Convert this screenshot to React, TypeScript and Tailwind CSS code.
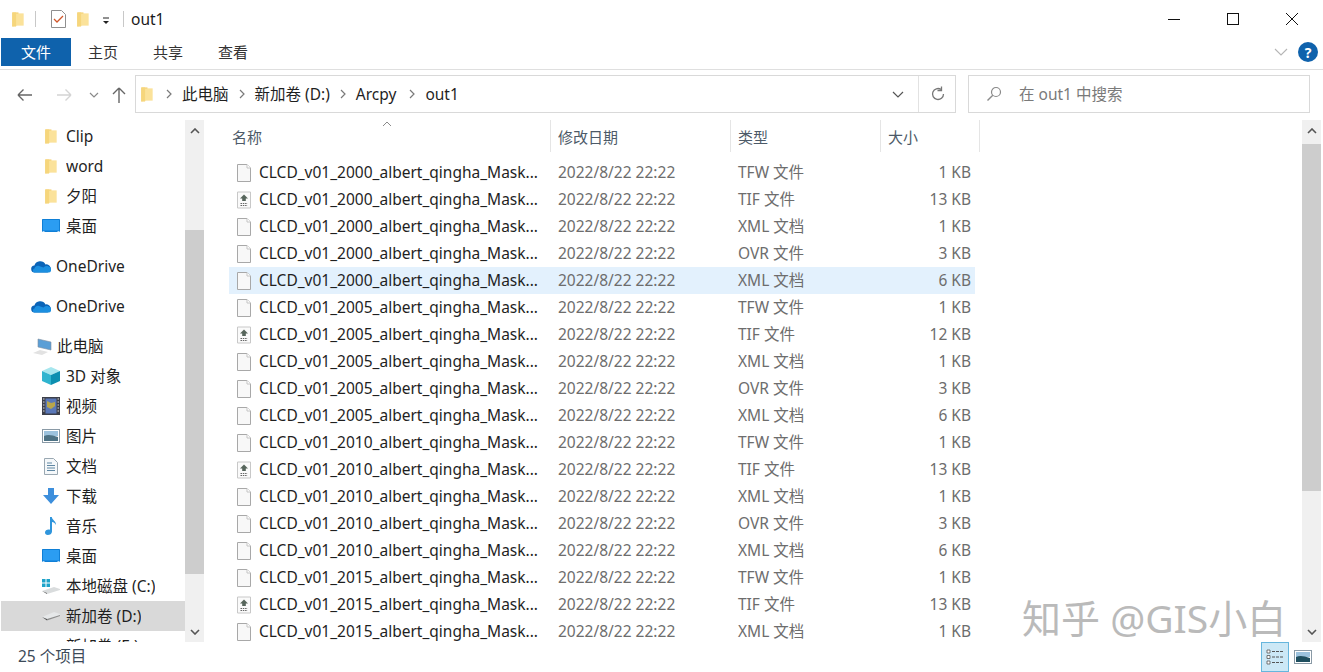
import type { ReactNode } from "react"

const FONT = "font-['Noto_Sans','Noto_Sans_CJK_SC',sans-serif]"

function Folder({ className = "" }: { className?: string }) {
  return (
    <svg viewBox="0 0 14 18" className={`h-[17px] w-[14px] shrink-0 ${className}`}>
      <path d="M1 1.500h6.500v13L1 16.500z" fill="#f3c95f" />
      <path d="M4 2.500h9v13H4z" fill="#fbe29a" />
      <path d="M1 1.500h4v15H1z" fill="#f6d67c" />
    </svg>
  )
}

function Desktop() {
  return (
    <svg viewBox="0 0 18 14" className="h-[14px] w-[18px] shrink-0">
      <rect x="0" y="0" width="18" height="13" rx="0.5" fill="#0f7fd6" />
      <path d="M1 1h16v10.500H1z" fill="#2b9df2" />
      <path d="M0.500 12.500h2M15.500 12.500h2" stroke="#e8f4fd" strokeWidth="0.800" />
    </svg>
  )
}

function Cloud() {
  return (
    <svg viewBox="0 0 20 13" className="h-[13px] w-[20px] shrink-0">
      <path d="M4 12.500a3.500 3.500 0 0 1-.6-7A6 6 0 0 1 14.500 4.500a4 4 0 0 1 2 8z" fill="#0a64b8" />
      <path d="M4 12.500h13a3 3 0 0 0 .5-6c-2-.8-3.500-.3-5 1L8 6c-2-.5-4 .5-4.500 2.500C1.500 9 1 12.500 4 12.500z" fill="#1b8fe0" />
    </svg>
  )
}

function Computer() {
  return (
    <svg viewBox="0 0 20 17" className="h-[17px] w-[20px] shrink-0">
      <path d="M6 1l13 3v8L6 9z" fill="#5b9fd6" stroke="#7f8f9f" strokeWidth="0.600" />
      <path d="M1 15l7-3 8 2-6 3z" fill="#e2e2e2" />
    </svg>
  )
}

function Cube() {
  return (
    <svg viewBox="0 0 18 18" className="h-[18px] w-[18px] shrink-0">
      <path d="M9 0l9 4-9 4-9-4z" fill="#a6e6ee" />
      <path d="M0 4l9 4v10l-9-4z" fill="#2fb4cf" />
      <path d="M18 4l-9 4v10l9-4z" fill="#0d8fb0" />
    </svg>
  )
}

function Film() {
  return (
    <svg viewBox="0 0 18 18" className="h-[18px] w-[18px] shrink-0">
      <rect width="18" height="18" fill="#3c3f4a" />
      <rect x="3.500" y="1.500" width="11" height="15" fill="#5a78b8" />
      <path d="M5 4l4 2 4-1v4l-4 3-4-2z" fill="#b9a64a" />
      <path d="M1 2h1.500M1 5h1.500M1 8h1.500M1 11h1.500M1 14h1.500M15.500 2H17M15.500 5H17M15.500 8H17M15.500 11H17M15.500 14H17" stroke="#d8d8d8" strokeWidth="1" />
    </svg>
  )
}

function Picture() {
  return (
    <svg viewBox="0 0 18 14" className="h-[14px] w-[18px] shrink-0">
      <rect x="0.500" y="0.500" width="17" height="13" fill="#fff" stroke="#8a9aa6" />
      <path d="M2 2h14v5H2z" fill="#9cc2dd" />
      <path d="M2 7c4-2 8-1 14 1v4H2z" fill="#4d7284" />
    </svg>
  )
}

function Doc() {
  return (
    <svg viewBox="0 0 14 17" className="h-[17px] w-[14px] shrink-0">
      <path d="M.5.500h9l4 4v12H.5z" fill="#f5f8fa" stroke="#9aa8b2" />
      <path d="M3 5h5M3 7.500h8M3 10h8M3 12.500h8" stroke="#5f87a3" strokeWidth="1" />
    </svg>
  )
}

function Download() {
  return (
    <svg viewBox="0 0 16 16" className="h-[16px] w-[16px] shrink-0">
      <path d="M5 0h6v7h5l-8 9-8-9h5z" fill="#3d8fdc" />
    </svg>
  )
}

function Music() {
  return (
    <svg viewBox="0 0 12 18" className="h-[18px] w-[12px] shrink-0">
      <path d="M5 0h1.800c.3 3 4.500 4 4.200 8-1-2-2.500-2.800-4-3v9.500C7 17 4.800 18 2.800 18 1 18 0 17 0 15.500 0 13.500 2.500 12 5 12.800z" fill="#2f95dc" />
    </svg>
  )
}

function DriveC() {
  return (
    <svg viewBox="0 0 20 16" className="h-[16px] w-[20px] shrink-0">
      <path d="M1 1h3.500v3.500H1zM5.500 1H9v3.500H5.500zM1 5.500h3.500V9H1zM5.500 5.500H9V9H5.500z" fill="#1fa3c9" />
      <path d="M1 13l12-4 6 2v1L6 16z" fill="#d9dcdd" />
      <path d="M1 13l5 3v-1z" fill="#6a6a6a" />
    </svg>
  )
}

function DriveD() {
  return (
    <svg viewBox="0 0 20 10" className="h-[10px] w-[20px] shrink-0">
      <path d="M1 6l12-5 6 2v1L6 9.500z" fill="#e6e8e9" />
      <path d="M1 6l5 3.500V8z" fill="#4e4e4e" />
      <path d="M6 8l13-4v1L6 9.500z" fill="#8d8d8d" />
    </svg>
  )
}

function BlankFile() {
  return (
    <svg viewBox="0 0 16 18" className="h-[18px] w-[16px] shrink-0">
      <path d="M1.500.500h9.500l3.500 3.500v13.500h-13z" fill="#f8f8f8" stroke="#a8a8a8" />
      <path d="M11 .500V4h3.500" fill="#fff" stroke="#c4c4c4" />
    </svg>
  )
}

function TifFile() {
  return (
    <svg viewBox="0 0 16 18" className="h-[18px] w-[16px] shrink-0">
      <path d="M1.500 1h13v16h-13z" fill="#fafafa" stroke="#c8c8c8" />
      <path d="M8 3.500l4 4H9.800V10H6.200V7.500H4z" fill="#56655b" />
      <path d="M4.500 12.500h7M4.500 14.500h7" stroke="#666" strokeWidth="1" strokeDasharray="1.500 .8" />
    </svg>
  )
}

function NavItem({ icon, label, indent, active }: { icon: ReactNode; label: string; indent: string; active?: boolean }) {
  return (
    <div className={`flex h-[30px] shrink-0 items-center text-[15.5px] text-[#1f1f1f] ${indent} ${active ? "bg-[#d9d9d9]" : ""}`}>
      {icon}
      <span className="mt-[2px] truncate">{label}</span>
    </div>
  )
}

function Crumb({ label, className = "" }: { label: string; className?: string }) {
  return (
    <div className={`flex items-center ${className}`}>
      <svg viewBox="0 0 6 10" className="mx-[10px] h-[10px] w-[6px]">
        <path d="M1 1l4 4-4 4" fill="none" stroke="#7a7a7a" strokeWidth="1.200" />
      </svg>
      <span className="mt-[2px]">{label}</span>
    </div>
  )
}

const quick = [
  { icon: <Folder className="mr-[8px]" />, label: "Clip" },
  { icon: <Folder className="mr-[8px]" />, label: "word" },
  { icon: <Folder className="mr-[8px]" />, label: "夕阳" },
]

const libs = [
  { icon: <Cube />, label: "3D 对象" },
  { icon: <Film />, label: "视频" },
  { icon: <Picture />, label: "图片" },
  { icon: <Doc />, label: "文档" },
  { icon: <Download />, label: "下载" },
  { icon: <Music />, label: "音乐" },
  { icon: <Desktop />, label: "桌面" },
  { icon: <DriveC />, label: "本地磁盘 (C:)" },
]

const files = [
  ["2000", "TFW 文件", "1 KB"],
  ["2000", "TIF 文件", "13 KB"],
  ["2000", "XML 文档", "1 KB"],
  ["2000", "OVR 文件", "3 KB"],
  ["2000", "XML 文档", "6 KB"],
  ["2005", "TFW 文件", "1 KB"],
  ["2005", "TIF 文件", "12 KB"],
  ["2005", "XML 文档", "1 KB"],
  ["2005", "OVR 文件", "3 KB"],
  ["2005", "XML 文档", "6 KB"],
  ["2010", "TFW 文件", "1 KB"],
  ["2010", "TIF 文件", "13 KB"],
  ["2010", "XML 文档", "1 KB"],
  ["2010", "OVR 文件", "3 KB"],
  ["2010", "XML 文档", "6 KB"],
  ["2015", "TFW 文件", "1 KB"],
  ["2015", "TIF 文件", "13 KB"],
  ["2015", "XML 文档", "1 KB"],
]

export default function App() {
  return (
    <div className={`relative flex h-[672px] w-[1323px] flex-col overflow-hidden bg-white ${FONT}`}>
      {/* title bar */}
      <div className="flex h-[38px] shrink-0 items-center">
        <Folder className="ml-[11px]" />
        <div className="ml-[10px] h-[16px] w-px bg-[#c8c8c8]" />
        <svg viewBox="0 0 15 18" className="ml-[15px] h-[18px] w-[15px]">
          <path d="M.5.500h10l4 4v13H.5z" fill="#fff" stroke="#8f8f8f" />
          <path d="M3 9l3 3 6-6" fill="none" stroke="#d0562a" strokeWidth="1.300" />
        </svg>
        <Folder className="ml-[10px]" />
        <svg viewBox="0 0 8 8" className="ml-[12px] mt-[3px] h-[8px] w-[8px]">
          <path d="M1 1h6" stroke="#222" strokeWidth="1" />
          <path d="M1 4h6L4 7z" fill="#222" />
        </svg>
        <div className="ml-[13px] h-[16px] w-px bg-[#c8c8c8]" />
        <span className="ml-[7px] mt-[2px] text-[15.5px] text-[#1a1a1a]">out1</span>
        <div className="ml-auto mr-[25px] flex items-center gap-[47px]">
          <svg viewBox="0 0 12 12" className="h-[12px] w-[12px]">
            <path d="M0 6.500h12" stroke="#111" strokeWidth="1" />
          </svg>
          <svg viewBox="0 0 12 12" className="h-[12px] w-[12px]">
            <rect x=".5" y=".5" width="11" height="11" fill="none" stroke="#111" />
          </svg>
          <svg viewBox="0 0 12 12" className="h-[12px] w-[12px]">
            <path d="M0 0l12 12M12 0L0 12" stroke="#111" strokeWidth="1" />
          </svg>
        </div>
      </div>

      {/* ribbon tabs */}
      <div className="flex h-[32px] shrink-0 border-b border-[#dfdfdf] pb-[3px] text-[15px] text-[#333]">
        <div className="ml-px flex w-[70px] items-center justify-center bg-[#0f62ac] text-white">文件</div>
        <div className="ml-[17px] flex items-center">主页</div>
        <div className="ml-[35px] flex items-center">共享</div>
        <div className="ml-[35px] flex items-center">查看</div>
        <div className="ml-auto mr-[5px] flex items-center gap-[10px]">
          <svg viewBox="0 0 14 8" className="h-[8px] w-[14px]">
            <path d="M1 1l6 6 6-6" fill="none" stroke="#b5b5b5" strokeWidth="1.100" />
          </svg>
          <div className="flex h-[20px] w-[20px] items-center justify-center rounded-full bg-[#0f62ac] text-[14px] font-bold text-white">?</div>
        </div>
      </div>

      {/* address bar */}
      <div className="flex h-[50px] shrink-0 items-center pb-[2px]">
        <svg viewBox="0 0 16 14" className="ml-[17px] mt-[2px] h-[14px] w-[16px]">
          <path d="M1 7h14M1 7l5.500-5.500M1 7l5.500 5.500" fill="none" stroke="#666" strokeWidth="1.400" />
        </svg>
        <svg viewBox="0 0 16 14" className="ml-[23px] mt-[2px] h-[14px] w-[16px]">
          <path d="M15 7H1M15 7L9.500 1.500M15 7l-5.500 5.500" fill="none" stroke="#d4d4d4" strokeWidth="1.400" />
        </svg>
        <svg viewBox="0 0 10 6" className="ml-[17px] mt-[2px] h-[6px] w-[10px]">
          <path d="M1 1l4 4 4-4" fill="none" stroke="#8a8a8a" strokeWidth="1.200" />
        </svg>
        <svg viewBox="0 0 14 16" className="ml-[13px] mt-[2px] h-[16px] w-[14px]">
          <path d="M7 16V1M7 1L1 7M7 1l6 6" fill="none" stroke="#666" strokeWidth="1.400" />
        </svg>
        <div className="ml-[9px] flex h-[38px] w-[821px] items-center border border-[#d9d9d9] text-[15.5px] text-[#1f1f1f]">
          <Folder className="ml-[4px] mr-[2px]" />
          <Crumb label="此电脑" />
          <Crumb label="新加卷 (D:)" />
          <Crumb label="Arcpy" className="mr-[3px]" />
          <Crumb label="out1" />
          <svg viewBox="0 0 12 7" className="ml-auto h-[7px] w-[12px]">
            <path d="M1 1l5 5 5-5" fill="none" stroke="#555" strokeWidth="1.200" />
          </svg>
          <div className="ml-[14px] h-full w-px bg-[#e2e2e2]" />
          <svg viewBox="0 0 16 16" className="ml-[11px] mr-[9px] h-[16px] w-[16px]">
            <path d="M13.500 8A5.500 5.500 0 1 1 11 3.400" fill="none" stroke="#777" strokeWidth="1.300" />
            <path d="M11.500 .5v4h-4" fill="none" stroke="#777" strokeWidth="1.300" />
          </svg>
        </div>
        <div className="ml-[12px] flex h-[38px] w-[342px] items-center border border-[#d9d9d9] text-[15.5px] text-[#7a7a7a]">
          <svg viewBox="0 0 16 16" className="ml-[17px] h-[16px] w-[16px]">
            <circle cx="10" cy="6" r="4.500" fill="none" stroke="#8a8a8a" strokeWidth="1.200" />
            <path d="M6.800 9.200L1.500 14.500" stroke="#8a8a8a" strokeWidth="1.400" />
          </svg>
          <span className="ml-[17px] mt-[2px]">在 out1 中搜索</span>
        </div>
      </div>

      {/* main */}
      <div className="flex h-[522px] shrink-0">
        <div className="flex w-[185px] shrink-0 flex-col overflow-hidden pl-px pt-px">
          {quick.map((item) => (
            <NavItem key={item.label} icon={item.icon} label={item.label} indent="pl-[43px]" />
          ))}
          <NavItem icon={<span className="mr-[6px]"><Desktop /></span>} label="桌面" indent="pl-[41px]" />
          <div className="h-[10px] shrink-0" />
          <NavItem icon={<span className="mr-[5px]"><Cloud /></span>} label="OneDrive" indent="pl-[30px]" />
          <div className="h-[10px] shrink-0" />
          <NavItem icon={<span className="mr-[5px]"><Cloud /></span>} label="OneDrive" indent="pl-[30px]" />
          <div className="h-[10px] shrink-0" />
          <NavItem icon={<span className="mr-[5px]"><Computer /></span>} label="此电脑" indent="pl-[31px]" />
          {libs.map((item) => (
            <NavItem
              key={item.label}
              icon={<span className="mr-[6px] flex w-[18px] justify-center">{item.icon}</span>}
              label={item.label}
              indent="pl-[41px]"
            />
          ))}
          <NavItem
            icon={<span className="mr-[6px] flex w-[18px] justify-center"><DriveD /></span>}
            label="新加卷 (D:)"
            indent="pl-[41px]"
            active
          />
          <NavItem icon={<span className="mr-[6px] w-[18px]" />} label="新加卷 (E:)" indent="pl-[41px]" />
        </div>

        {/* sidebar scrollbar */}
        <div className="flex w-[19px] shrink-0 flex-col bg-[#f0f0f0]">
          <div className="flex h-[110px] justify-center pt-[8px]">
            <svg viewBox="0 0 10 6" className="h-[6px] w-[10px]">
              <path d="M1 5l4-4 4 4" fill="none" stroke="#555" strokeWidth="1.600" />
            </svg>
          </div>
          <div className="h-[344px] bg-[#cdcdcd]" />
          <div className="flex flex-1 items-end justify-center pb-[7px]">
            <svg viewBox="0 0 10 6" className="h-[6px] w-[10px]">
              <path d="M1 1l4 4 4-4" fill="none" stroke="#555" strokeWidth="1.600" />
            </svg>
          </div>
        </div>

        {/* file list */}
        <div className="relative flex min-w-0 flex-1 flex-col overflow-hidden">
          <div className="ml-[25px] grid h-[39px] w-[751px] shrink-0 grid-cols-[321px_180px_150px_100px] pb-[7px] text-[15px] text-[#4d5a68]">
            <div className="flex items-center pl-[3px]"><span className="mt-[2px]">名称</span></div>
            <div className="flex items-center border-l border-[#e5e5e5] pl-[7px]"><span className="mt-[2px]">修改日期</span></div>
            <div className="flex items-center border-l border-[#e5e5e5] pl-[7px]"><span className="mt-[2px]">类型</span></div>
            <div className="flex items-center border-x border-[#e5e5e5] pl-[7px]"><span className="mt-[2px]">大小</span></div>
          </div>
          <svg viewBox="0 0 10 6" className="absolute left-[178px] top-[1px] h-[6px] w-[10px]">
            <path d="M1 5l4-4 4 4" fill="none" stroke="#8a8a8a" strokeWidth="1" />
          </svg>
          {files.map(([year, type, size], i) => (
            <div
              key={i}
              className={`ml-[25px] grid h-[27px] w-[746px] shrink-0 grid-cols-[321px_180px_150px_95px] items-center text-[15.5px] ${i === 4 ? "bg-[#e3f1fd]" : ""}`}
            >
              <div className="flex items-center pl-[7px] text-[#1f1f1f]">
                {type.startsWith("TIF") ? <TifFile /> : <BlankFile />}
                <span className="ml-[7px] whitespace-nowrap">{`CLCD_v01_${year}_albert_qingha_Mask...`}</span>
              </div>
              <div className="pl-[8px] text-[#6d6d6d]">2022/8/22 22:22</div>
              <div className="pl-[8px] text-[#6d6d6d]">{type}</div>
              <div className="pr-[4px] text-right text-[#6d6d6d]">{size}</div>
            </div>
          ))}
        </div>

        {/* list scrollbar */}
        <div className="mr-[2px] flex w-[19px] shrink-0 flex-col bg-[#f0f0f0]">
          <div className="flex h-[24px] justify-center pt-[8px]">
            <svg viewBox="0 0 10 6" className="h-[6px] w-[10px]">
              <path d="M1 5l4-4 4 4" fill="none" stroke="#555" strokeWidth="1.600" />
            </svg>
          </div>
          <div className="h-[347px] bg-[#cdcdcd]" />
          <div className="flex flex-1 items-end justify-center pb-[7px]">
            <svg viewBox="0 0 10 6" className="h-[6px] w-[10px]">
              <path d="M1 1l4 4 4-4" fill="none" stroke="#555" strokeWidth="1.600" />
            </svg>
          </div>
        </div>
      </div>

      {/* status bar */}
      <div className="flex min-h-0 flex-1 items-center text-[15.5px] text-[#3c4a58]">
        <span className="ml-[18px]">25 个项目</span>
        <div className="ml-auto mr-[11px] flex items-center gap-[5px]">
          <div className="flex h-[30px] w-[28px] items-center justify-center border border-[#66b6dd] bg-[#cce8f6]">
            <svg viewBox="0 0 18 16" className="h-[16px] w-[18px]">
              <path d="M1 1h3v3H1zM1 6.500h3v3H1zM1 12h3v3H1z" fill="#fff" stroke="#555" strokeWidth=".8" />
              <path d="M6 2.500h11M6 8h11M6 13.500h11" stroke="#555" strokeWidth="1" strokeDasharray="3 1" />
            </svg>
          </div>
          <svg viewBox="0 0 18 14" className="h-[14px] w-[18px]">
            <rect x=".5" y=".5" width="17" height="13" fill="#fff" stroke="#8a9aa6" />
            <path d="M2 2h14v5H2z" fill="#9cc2dd" />
            <path d="M2 7c4-2 8-1 14 1v4H2z" fill="#1f4f5f" />
          </svg>
        </div>
      </div>

      {/* watermark */}
      <div className="absolute left-[1022px] top-[592px] whitespace-nowrap text-[39px] leading-[52px] text-[#bababa]">
        知乎 @GIS小白
      </div>
    </div>
  )
}
